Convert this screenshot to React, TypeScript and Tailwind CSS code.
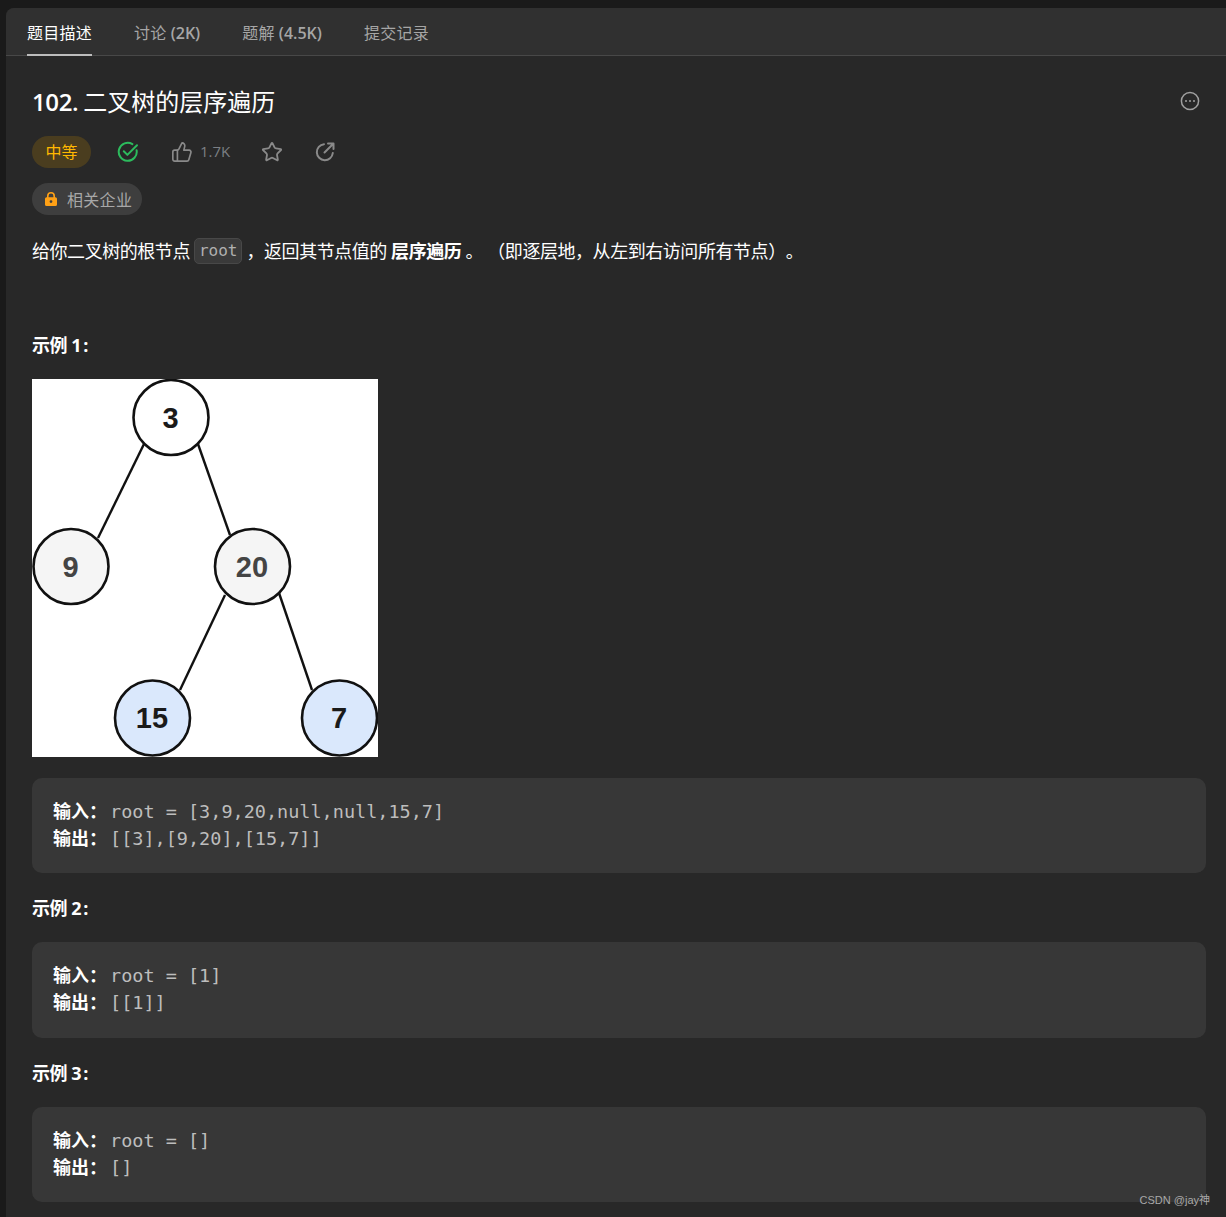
import React from 'react';
import { ThumbsUp, Star } from 'lucide-react';

const cjk = "font-['Open_Sans','Noto_Sans_CJK_SC',sans-serif]";

const tabs = [
  { label: '讨论', count: '(2K)' },
  { label: '题解', count: '(4.5K)' },
  { label: '提交记录', count: '' },
];

const examples = [
  { n: 2, input: 'root = [1]', output: '[[1]]' },
  { n: 3, input: 'root = []', output: '[]' },
];

function SectionTitle({ n }: { n: number }) {
  return (
    <div className="text-[18px] leading-[28px] tracking-[-0.5px] font-bold whitespace-pre text-white">
      示例 <span className="tracking-[1.8px]">{n}:</span>
    </div>
  );
}

function ExampleBlock({ input, output }: { input: string; output: string }) {
  return (
    <div className="rounded-[10px] bg-[#373737] pl-[21px] pt-[20px] pb-[21.4px] text-[18.5px] leading-[27px] text-[#bdbdbd] font-['DejaVu_Sans_Mono','Noto_Sans_CJK_SC',monospace]">
      <div className="h-[27px] whitespace-pre">
        <b className={`${cjk} text-[18px] font-bold text-white`}>输入：</b>
        <span className="ml-[3px]">{input}</span>
      </div>
      <div className="h-[27px] whitespace-pre">
        <b className={`${cjk} text-[18px] font-bold text-white`}>输出：</b>
        <span className="ml-[3px]">{output}</span>
      </div>
    </div>
  );
}

function TreeDiagram() {
  const nodes = [
    { x: 139, y: 38.5, fill: '#ffffff', color: '#1a1a1a', label: '3' },
    { x: 39, y: 187.5, fill: '#f5f5f5', color: '#444444', label: '9' },
    { x: 220.5, y: 187.5, fill: '#f5f5f5', color: '#444444', label: '20' },
    { x: 120.5, y: 339, fill: '#dae8fc', color: '#1a1a1a', label: '15' },
    { x: 307.5, y: 339, fill: '#dae8fc', color: '#1a1a1a', label: '7' },
  ];
  return (
    <svg width="346" height="378" viewBox="0 0 346 378" className="block bg-white">
      <g stroke="#111111" strokeWidth="2.4">
        <line x1="112" y1="65" x2="66" y2="159" />
        <line x1="166" y1="65" x2="198" y2="156" />
        <line x1="193" y1="216" x2="148" y2="311" />
        <line x1="247" y1="214" x2="280" y2="311" />
      </g>
      {nodes.map((n) => (
        <g key={n.label}>
          <circle cx={n.x} cy={n.y} r="37.5" fill={n.fill} stroke="#111111" strokeWidth="2.6" />
          <text
            x={n.x - 0.5}
            y={n.y + 10}
            textAnchor="middle"
            fontFamily="Liberation Sans, sans-serif"
            fontWeight="700"
            fontSize="29"
            fill={n.color}
          >
            {n.label}
          </text>
        </g>
      ))}
    </svg>
  );
}

export default function App() {
  return (
    <div className={`relative h-[1217px] w-[1226px] overflow-hidden bg-[#1a1a1a] pl-[6px] pt-[8px] ${cjk}`}>
      <div className="h-full rounded-tl-[8px] bg-[#282828]">
        <div className="flex h-[48px] items-start gap-[42px] rounded-tl-[8px] border-b border-[#484848] bg-[#303030] pl-[21px]">
          <div className="h-[47.5px] w-[65px] border-b-2 border-[#bdbdbd] pt-[13px] text-[16px] leading-[24px] tracking-[0.25px] whitespace-nowrap text-white">
            题目描述
          </div>
          {tabs.map((tab) => (
            <div key={tab.label} className="pt-[13px] text-[16px] leading-[24px] whitespace-pre text-[#a6a6a6] tracking-[0.25px]">
              {tab.label}
              {tab.count && <span className="font-semibold tracking-[0px]"> {tab.count}</span>}
            </div>
          ))}
        </div>

        <div className="pl-[26px] pr-[20px]">
          <div className="relative mt-[30px] text-[24px] leading-[32px] text-white">
            <span className="font-semibold tracking-[-0.4px]">102.</span>
            <span className="ml-[5px] font-normal">二叉树的层序遍历</span>
            <svg width="20" height="20" viewBox="0 0 20 20" fill="none" className="absolute right-[6px] top-[5px]">
              <circle cx="10" cy="10" r="8.6" stroke="#a0a0a0" strokeWidth="1.5" />
              <circle cx="6" cy="10" r="1" fill="#a0a0a0" />
              <circle cx="10" cy="10" r="1" fill="#a0a0a0" />
              <circle cx="14" cy="10" r="1" fill="#a0a0a0" />
            </svg>
          </div>

          <div className="mt-[18px] flex h-[32px] items-center">
            <div className="flex h-[32px] w-[59px] items-center justify-center rounded-full bg-[#4a3d1f] text-[16px] text-[#ffb800]">
              中等
            </div>
            <svg width="22" height="22" viewBox="0 0 22 22" fill="none" className="ml-[26px]">
              <path d="M19.6 9.2A9 9 0 1 1 15.4 3.1" stroke="#2cbb5d" strokeWidth="2" strokeLinecap="round" />
              <path d="M6.8 10.2l3.6 3.7 9.6-9.7" stroke="#2cbb5d" strokeWidth="2" strokeLinecap="round" strokeLinejoin="round" />
            </svg>
            <ThumbsUp size={22} strokeWidth={1.8} className="ml-[32px] text-[#8a8a8a]" />
            <span className="ml-[7px] mb-[2px] text-[15px] text-[#7b7f84]">1.7K</span>
            <Star size={22} strokeWidth={2} className="ml-[31px] text-[#8a8a8a]" />
            <svg width="22" height="22" viewBox="0 0 22 22" fill="none" className="ml-[31px]">
              <path d="M10 3.2A8 8 0 1 0 18.8 12" stroke="#8a8a8a" strokeWidth="2" strokeLinecap="round" />
              <path d="M10.5 11.5l8.5-8.5M14 2.5h5.5V8" stroke="#8a8a8a" strokeWidth="2" strokeLinecap="round" strokeLinejoin="round" />
            </svg>
          </div>

          <div className="mt-[15px] flex h-[32px] w-[110px] items-center rounded-full bg-[#3e3e3e] pl-[13px]">
            <svg width="12" height="14" viewBox="0 0 12 14" fill="#ffa116">
              <path d="M2 5.2V4a4 4 0 0 1 8 0v1.2h.4A1.6 1.6 0 0 1 12 6.8v5.6a1.6 1.6 0 0 1-1.6 1.6H1.6A1.6 1.6 0 0 1 0 12.4V6.8a1.6 1.6 0 0 1 1.6-1.6zm1.6 0h4.8V4a2.4 2.4 0 0 0-4.8 0zM6 8.2a1.4 1.4 0 1 0 0 2.8 1.4 1.4 0 0 0 0-2.8z" />
            </svg>
            <span className="ml-[10px] pt-[2px] text-[16px] tracking-[0.3px] whitespace-nowrap text-[#a8a8a8]">相关企业</span>
          </div>

          <p className="mt-[22px] flex h-[28px] items-center text-[18px] tracking-[-0.45px] whitespace-pre text-white">
            给你二叉树的根节点
            <code className="mx-[4px] rounded-[5px] border border-[#484848] bg-[#3a3a3a] px-[4px] text-[16px] leading-[24px] tracking-normal text-[#b0b0b0] font-['DejaVu_Sans_Mono',monospace]">
              root
            </code>
            ，返回其节点值的 <b className="font-bold">层序遍历</b> 。 （即逐层地，从左到右访问所有节点
            <span className="[text-spacing-trim:space-all]">）。</span>
          </p>

          <div className="mt-[66px]">
            <SectionTitle n={1} />
          </div>

          <div className="mt-[20px]">
            <TreeDiagram />
          </div>

          <div className="mt-[21px]">
            <ExampleBlock input="root = [3,9,20,null,null,15,7]" output="[[3],[9,20],[15,7]]" />
          </div>

          {examples.map((ex) => (
            <div key={ex.n}>
              <div className="mt-[21px] mb-[20px]">
                <SectionTitle n={ex.n} />
              </div>
              <ExampleBlock input={ex.input} output={ex.output} />
            </div>
          ))}
        </div>
      </div>

      <div className="absolute right-[16px] bottom-[9px] text-[11px] leading-[16px] text-[#a8a8a8] font-['Liberation_Sans','Noto_Sans_CJK_SC',sans-serif]">CSDN @jay神</div>
    </div>
  );
}
